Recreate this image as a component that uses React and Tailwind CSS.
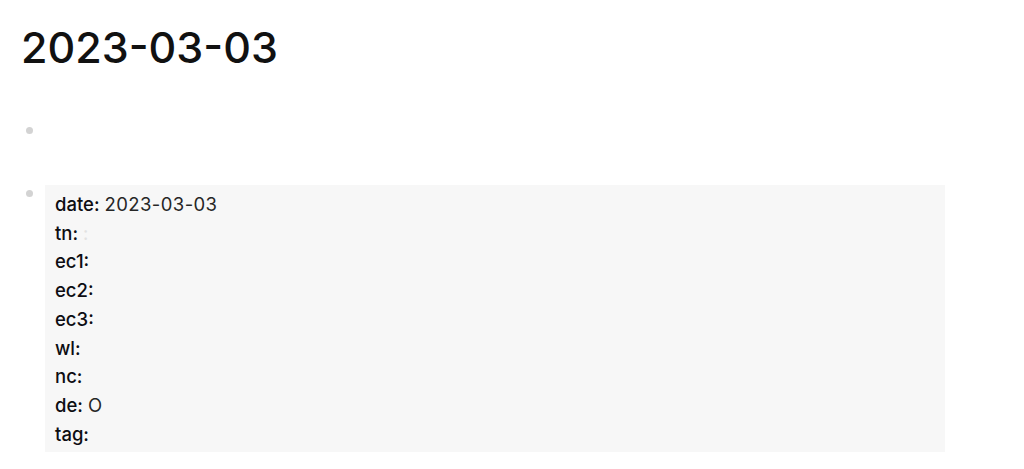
const props = [
  { k: "date", v: "2023-03-03" },
  { k: "tn", v: ":", faint: true },
  { k: "ec1", v: "" },
  { k: "ec2", v: "" },
  { k: "ec3", v: "" },
  { k: "wl", v: "" },
  { k: "nc", v: "" },
  { k: "de", v: "O" },
  { k: "tag", v: "" },
];

const Bullet = () => (
  <div className="w-[18px] h-[16px] flex items-center justify-center shrink-0">
    <span className="w-[7px] h-[7px] rounded-full bg-[#d3d3d3]" />
  </div>
);

export default function App() {
  return (
    <div
      className="min-h-screen bg-white text-[#222]"
      style={{ fontFamily: "Inter, 'Noto Sans', sans-serif" }}
    >
      <div className="pl-[21px] pt-[19px]">
        <h1 className="text-[43px] leading-[56px] font-medium text-[#111]">
          2023-03-03
        </h1>
      </div>

      <div className="pl-[20px] pt-[47px] flex flex-col">
        <div className="flex items-start">
          <Bullet />
        </div>

        <div className="flex items-start mt-[47px]">
          <Bullet />
          <div className="ml-[7px] w-[900px] bg-[#f7f7f7] pl-[10px] pt-[5px] pb-[4px] text-[18.5px] leading-[28.7px]">
            {props.map((p) => (
              <div key={p.k}>
                <span className="font-medium text-[#0d0d12]">{p.k}:</span>
                {p.v && (
                  <span
                    className={
                      p.faint
                        ? "ml-[5px] text-[#e2e2e2]"
                        : "ml-[5px] text-[#262626] tracking-[0.4px]"
                    }
                  >
                    {p.v}
                  </span>
                )}
              </div>
            ))}
          </div>
        </div>
      </div>
    </div>
  );
}
